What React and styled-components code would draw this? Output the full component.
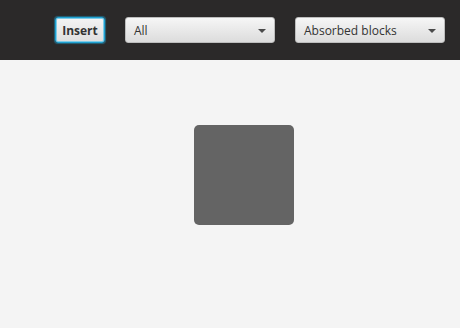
import React, { useState } from 'react'
import styled, { createGlobalStyle } from 'styled-components'

const GlobalStyle = createGlobalStyle`
  html, body {
    margin: 0;
    padding: 0;
    background: #f4f4f4;
    font-family: "Open Sans", "Noto Sans", "Liberation Sans", sans-serif;
  }
`

const App = () => {
  const [filter, setFilter] = useState('All')
  const [mode, setMode] = useState('Absorbed blocks')

  return (
    <Page>
      <GlobalStyle />
      <ToolBar>
        <InsertButton>Insert</InsertButton>
        <Select>
          <span>{filter}</span>
          <Arrow />
        </Select>
        <Select>
          <span>{mode}</span>
          <Arrow />
        </Select>
      </ToolBar>
      <Canvas>
        <Block />
      </Canvas>
    </Page>
  )
}

export default App

const Page = styled.div`
  width: 460px;
  height: 328px;
  display: flex;
  flex-direction: column;
  background: #f4f4f4;
`
const ToolBar = styled.div`
  height: 60px;
  background: #2b2929;
  display: flex;
  align-items: center;
  gap: 20px;
  padding-left: 55px;
  box-sizing: border-box;
`
const InsertButton = styled.button`
  flex: none;
  width: 50px;
  height: 26px;
  box-sizing: border-box;
  border: 1px solid #1ea0d0;
  border-radius: 3px;
  box-shadow: 0 0 0 1px #7fcbe6 inset, 0 0 1px 1px rgba(30, 160, 208, 0.5);
  background: linear-gradient(#f4f4f4, #dedede);
  font-family: "Open Sans", "Noto Sans", "Liberation Sans", sans-serif;
  font-weight: 700;
  font-size: 12px;
  color: #333;
  padding: 0;
  cursor: pointer;
`
const Select = styled.div`
  flex: none;
  width: 150px;
  height: 26px;
  box-sizing: border-box;
  border: 1px solid #bdbdbd;
  border-radius: 3px;
  background: linear-gradient(#f6f6f6, #dcdcdc);
  display: flex;
  align-items: center;
  justify-content: space-between;
  padding: 1px 8px 0 8px;
  font-size: 12px;
  color: #333;
  span {
    line-height: 1;
  }
`
const Arrow = styled.div`
  width: 0;
  height: 0;
  border-left: 4px solid transparent;
  border-right: 4px solid transparent;
  border-top: 4px solid #4a4a4a;
`
const Canvas = styled.div`
  flex: 1;
  display: flex;
  justify-content: center;
  padding-top: 65px;
  padding-left: 27px;
  box-sizing: border-box;
`
const Block = styled.div`
  width: 100px;
  height: 100px;
  background: #646464;
  border-radius: 5px;
`
